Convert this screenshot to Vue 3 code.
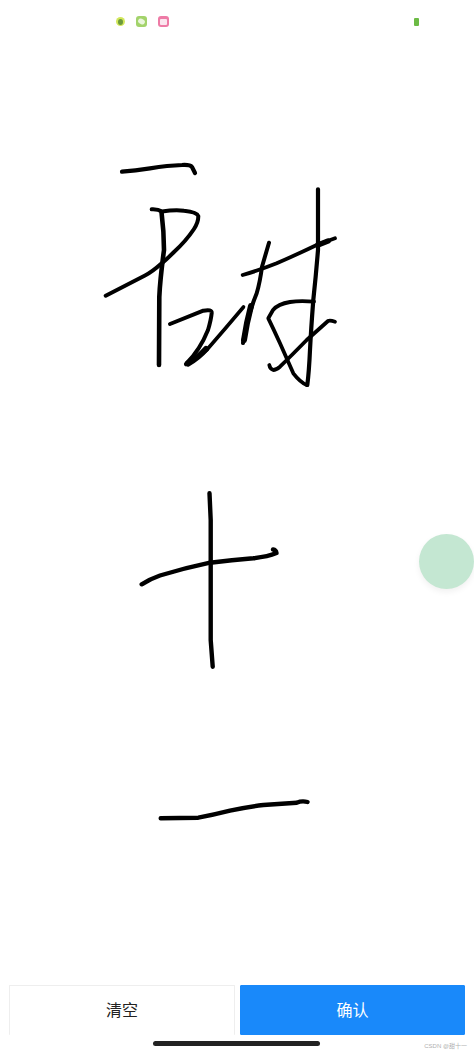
<script setup>
const strokes = [
  { d: 'M122 171.7 Q135 170.5 150 168.3 Q168 165.5 182 165 Q190 164.5 192 167 L195 173', w: 4.2 },
  { d: 'M151.7 209.3 Q158 209 162 211.5 Q175 209.5 184 210.7 Q197 212 198.3 216 Q198.5 222 194 229 Q186 241 174 252 Q166 260 161.7 263.3 Q152 272 145 275.5 L105.7 295.7', w: 4 },
  { d: 'M161.5 212 Q164 232 164 250 Q160 280 159.3 297 L159 365', w: 4.6 },
  { d: 'M170 324 Q190 316 203.3 310.7 Q212 309 211.7 313 Q211 320 208 330 Q200 350 186 364', w: 4 },
  { d: 'M186 364.5 Q198 358 206.7 350 Q225 329 243.5 307', w: 3.6 },
  { d: 'M188 363.5 Q198 358 206 349', w: 6 },
  { d: 'M269 242.7 L262 266.7 Q260 282 256.7 293.3 Q250 310 247 323 L243 343', w: 4 },
  { d: 'M251 306 L247 323 L244 340', w: 6 },
  { d: 'M242.7 275 Q260 270 276.7 263.3 Q298 254 316.7 245 L335 238.3', w: 3.8 },
  { d: 'M318 245 L328 241', w: 5.5 },
  { d: 'M318 189.3 L318 250 Q316 275 313.3 300 Q311 330 310 350 Q309 372 307.3 385', w: 4.2 },
  { d: 'M314 301.7 Q300 300.5 290 302 Q278 304 273 310 L268.3 318.3 Q274 330 280 343.3 L293.3 373.3 Q300 382 306.7 385', w: 3.8 },
  { d: 'M335 321.7 Q330 320 328 321 Q318 330 306.7 340 Q292 355 280 366.7 Q276 370 273.3 370 Q270 369 269.3 365', w: 3.8 },
  { d: 'M209.5 493.3 L210.7 520 L210.7 640 L212.7 666.7', w: 4.4 },
  { d: 'M141.7 584.3 Q150 579 160 575.5 Q185 568 210 562.7 Q232 560 253.3 558.3 Q268 556.5 276.5 553 Q276 550 273 549.5', w: 4.4 },
  { d: 'M160.7 818.3 L198.3 817.7 Q213 815 230 810.7 Q247 807 263.3 805 L296.7 802.7 Q302 800.5 307.5 802', w: 4.4 }
]
</script>

<template>
  <div class="page">
    <header class="status">
      <div class="apps">
        <span class="dot"><span class="dot-core"></span></span>
        <span class="app app-green"><span class="bubble"></span></span>
        <span class="app app-pink"><span class="square"></span></span>
      </div>
      <span class="battery"></span>
    </header>

    <main class="canvas">
      <svg class="ink" viewBox="0 40 474 945" width="474" height="945" aria-label="手写签名">
        <path
          v-for="(s, i) in strokes"
          :key="i"
          :d="s.d"
          :stroke-width="s.w"
          fill="none"
          stroke="#000"
          stroke-linecap="round"
          stroke-linejoin="round"
        />
      </svg>
      <button class="float" aria-label="悬浮按钮"></button>
    </main>

    <footer class="actions">
      <button class="btn btn-clear">清空</button>
      <button class="btn btn-ok">确认</button>
    </footer>

    <div class="home">
      <span class="home-bar"></span>
      <span class="mark">CSDN @甜十一</span>
    </div>
  </div>
</template>

<style scoped>
.page {
  width: 474px;
  height: 1053px;
  display: flex;
  flex-direction: column;
  background: #fff;
  overflow: hidden;
  font-family: "Liberation Sans", "Noto Sans CJK SC", sans-serif;
}
.status {
  height: 40px;
  flex: none;
  display: flex;
  align-items: flex-start;
  justify-content: space-between;
  padding: 16px 55px 0 116px;
  box-sizing: border-box;
}
.apps {
  display: flex;
  align-items: center;
  gap: 11px;
}
.dot {
  width: 9px;
  height: 9px;
  border-radius: 50%;
  background: #d3e85c;
  display: flex;
  align-items: center;
  justify-content: center;
}
.dot-core {
  width: 5px;
  height: 6px;
  border-radius: 50%;
  background: #6c9a3c;
}
.app {
  width: 11px;
  height: 11px;
  border-radius: 3px;
  display: flex;
  align-items: center;
  justify-content: center;
}
.app-green { background: #a3d36b; }
.app-pink { background: #ee7ba6; }
.bubble {
  width: 7px;
  height: 5px;
  border-radius: 3px;
  background: #eaf6dc;
  transform: rotate(30deg);
}
.square {
  width: 7px;
  height: 6px;
  border-radius: 1px;
  background: #fbe6ef;
}
.battery {
  width: 5px;
  height: 8px;
  margin-top: 2px;
  border-radius: 1px;
  background: #6cbb45;
}
.canvas {
  height: 945px;
  flex: none;
  position: relative;
}
.ink {
  display: block;
}
.float {
  position: absolute;
  left: 418.5px;
  top: 494px;
  width: 55px;
  height: 55px;
  padding: 0;
  border: 0;
  border-radius: 50%;
  background: #c4e7d2;
  box-shadow: 0 3px 6px rgba(0, 0, 0, 0.06);
}
.actions {
  height: 49.5px;
  flex: none;
  display: flex;
  gap: 5px;
  padding: 0 8.7px 0 9.3px;
}
.btn {
  flex: 1 1 0;
  padding: 0 0 2px;
  font: 16px "Liberation Sans", "Noto Sans CJK SC", sans-serif;
  box-sizing: border-box;
  border-radius: 1px;
}
.btn-clear {
  background: #fff;
  color: #222;
  border: 1px solid #eeeeee;
  border-bottom: 0;
}
.btn-ok {
  background: #1989fa;
  color: #fff;
  border: 1px solid #1989fa;
}
.home {
  flex: 1;
  position: relative;
}
.home-bar {
  position: absolute;
  left: 153px;
  top: 6.5px;
  width: 167px;
  height: 5px;
  border-radius: 3px;
  background: #222;
}
.mark {
  position: absolute;
  right: 7px;
  top: 6px;
  font-size: 6px;
  line-height: 10px;
  color: #b0b0b0;
  white-space: nowrap;
}
</style>
